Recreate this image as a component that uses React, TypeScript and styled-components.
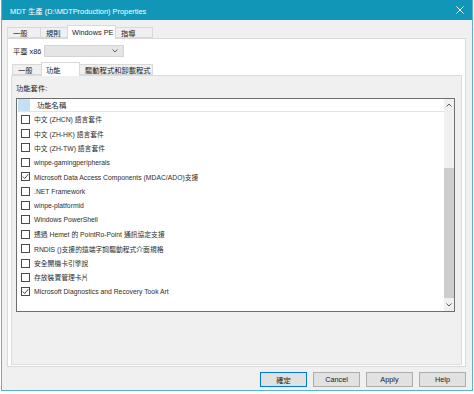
import React from 'react';
import styled, {createGlobalStyle} from 'styled-components';

const GlobalStyle = createGlobalStyle`
  html, body {
    margin: 0;
    padding: 0;
    background: #fff;
  }
  body {
    font-family: "Liberation Sans", "Noto Sans CJK TC", sans-serif;
    font-size: 6.8px;
    color: #222;
  }
  #root {
    width: 474px;
    height: 394px;
  }
`

const Window = styled.div`
  box-sizing: border-box;
  margin-left: 1px;
  width: 472px;
  height: 391px;
  display: flex;
  flex-direction: column;
  border: 1px solid #58b4cf;
  border-top: none;
  background: #f0f0f0;
`
const TitleBar = styled.header`
  height: 20px;
  flex-shrink: 0;
  display: flex;
  align-items: center;
  justify-content: space-between;
  padding: 0 8px 0 8px;
  background: #1196b8;
  color: #fff;
  font-size: 7.4px;
`
const Body = styled.div`
  flex: 1;
  display: flex;
  flex-direction: column;
  padding: 5px 6px 0 5px;
`
const TabStrip = styled.div<{$h: number; $pl?: number}>`
  display: flex;
  align-items: flex-end;
  height: ${p => p.$h}px;
  padding-left: ${p => p.$pl || 0}px;
  flex-shrink: 0;
  position: relative;
  z-index: 1;
`
const Tab = styled.div<{$w: number; $active?: boolean}>`
  box-sizing: border-box;
  width: ${p => p.$w}px;
  height: ${p => (p.$active ? 14 : 11)}px;
  margin-bottom: ${p => (p.$active ? -1 : 0)}px;
  padding-left: ${p => (p.$active ? 4 : 5)}px;
  display: flex;
  align-items: center;
  white-space: nowrap;
  font-size: 7.3px;
  color: #1a1a1a;
  background: ${p => (p.$active ? '#fff' : '#f0f0f0')};
  border: 1px solid #d9d9d9;
  border-bottom: ${p => (p.$active ? 'none' : '1px solid #d9d9d9')};
  & + & {
    margin-left: -1px;
  }
`
const OuterPage = styled.div`
  box-sizing: border-box;
  height: 329px;
  display: flex;
  flex-direction: column;
  padding: 6px 3px 1px 3px;
  background: #fff;
  border: 1px solid #d9d9d9;
`
const PlatformRow = styled.div`
  height: 12px;
  display: flex;
  align-items: center;
  padding-left: 2px;
  font-size: 7.3px;
  color: #1a1a1a;
`
const Combo = styled.div`
  box-sizing: border-box;
  width: 80px;
  height: 12px;
  margin-left: 3px;
  display: flex;
  align-items: center;
  justify-content: flex-end;
  padding-right: 5px;
  background: #e5e5e5;
  border: 1px solid #d4d4d4;
`
const InnerTabs = styled(TabStrip)`
  margin-top: 5px;
`
const InnerPage = styled.div`
  box-sizing: border-box;
  flex: 1;
  display: flex;
  flex-direction: column;
  padding: 6px 6px 0 4px;
  background: #f0f0f0;
  border: 1px solid #dcdcdc;
`
const Label = styled.div`
  line-height: 14px;
  font-size: 7.3px;
  color: #1a1a1a;
`
const ListBox = styled.div`
  box-sizing: border-box;
  margin-top: 2px;
  height: 214px;
  display: flex;
  background: #fff;
  border: 1px solid #6e6e6e;
`
const List = styled.div`
  flex: 1;
  display: flex;
  flex-direction: column;
`
const Header = styled.div`
  box-sizing: border-box;
  height: 13px;
  display: flex;
  align-items: center;
  border-bottom: 1px solid #e3e3e3;
  font-size: 7.3px;
  color: #1a1a1a;
`
const HeaderMark = styled.div`
  width: 12px;
  height: 12px;
  margin: 0 7px 0 1px;
  background: #c5dff5;
`
const Row = styled.div`
  height: 14.4px;
  display: flex;
  align-items: center;
  padding-left: 4px;
  color: #2e2e2e;
  white-space: nowrap;
`
const Check = styled.div`
  box-sizing: border-box;
  width: 9px;
  height: 9px;
  margin-right: 4px;
  flex-shrink: 0;
  border: 1px solid #4a4a4a;
  background: #fff;
  display: flex;
  align-items: center;
  justify-content: center;
`
const ScrollBar = styled.div`
  width: 10px;
  display: flex;
  flex-direction: column;
  background: #f0f0f0;
`
const ScrollArrow = styled.div`
  height: 12px;
  display: flex;
  align-items: center;
  justify-content: center;
`
const Track = styled.div`
  flex: 1;
  padding-top: 57px;
`
const Thumb = styled.div`
  height: 130px;
  background: #cdcdcd;
`
const Footer = styled.footer`
  height: 23px;
  flex-shrink: 0;
  display: flex;
  justify-content: flex-end;
  align-items: flex-start;
  gap: 6px;
  padding-top: 5px;
  box-sizing: border-box;
`
const Button = styled.button<{$default?: boolean}>`
  box-sizing: border-box;
  width: 47px;
  height: 15px;
  padding: 0;
  font-family: inherit;
  font-size: 7.3px;
  color: #1a1a1a;
  background: #e1e1e1;
  border: 1px solid ${p => (p.$default ? '#0078d7' : '#adadad')};
`

const Chevron = ({up}: {up?: boolean}) => (
  <svg width="6" height="4" viewBox="0 0 6 4">
    <path d={up ? 'M0.5 3.5 L3 1 L5.5 3.5' : 'M0.5 0.5 L3 3 L5.5 0.5'} fill="none" stroke="#606060" strokeWidth="1" />
  </svg>
)

const rows: {name: string; checked?: boolean}[] = [
  {name: '中文 (ZHCN) 語言套件'},
  {name: '中文 (ZH-HK) 語言套件'},
  {name: '中文 (ZH-TW) 語言套件'},
  {name: 'winpe-gamingperipherals'},
  {name: 'Microsoft Data Access Components (MDAC/ADO)支援', checked: true},
  {name: '.NET Framework'},
  {name: 'winpe-platformid'},
  {name: 'Windows PowerShell'},
  {name: '透過 Hemet 的 PointRo-Point 通訊協定支援'},
  {name: 'RNDIS ()支援的遠端字詞驅動程式介面規格'},
  {name: '安全開機卡引擎說'},
  {name: '存放裝置管理卡片'},
  {name: 'Microsoft Diagnostics and Recovery Took Art', checked: true},
]

const App: React.FC = () => {
  return (
    <>
      <GlobalStyle />
      <Window>
        <TitleBar>
          <span>MDT 生產 (D:\MDTProduction) Properties</span>
          <svg width="8" height="8" viewBox="0 0 8 8">
            <path d="M0.5 0.5 L7.5 7.5 M7.5 0.5 L0.5 7.5" stroke="#fff" strokeWidth="1" />
          </svg>
        </TitleBar>
        <Body>
          <TabStrip $h={13}>
            <Tab $w={34}>一般</Tab>
            <Tab $w={28}>規則</Tab>
            <Tab $w={49} $active>Windows PE</Tab>
            <Tab $w={38}>指導</Tab>
          </TabStrip>
          <OuterPage>
            <PlatformRow>
              平臺 x86
              <Combo><Chevron /></Combo>
            </PlatformRow>
            <InnerTabs $h={13} $pl={1}>
              <Tab $w={30}>一般</Tab>
              <Tab $w={39} $active>功能</Tab>
              <Tab $w={74}>驅動程式和卸載程式</Tab>
            </InnerTabs>
            <InnerPage>
              <Label>功能套件:</Label>
              <ListBox>
                <List>
                  <Header>
                    <HeaderMark />
                    功能名稱
                  </Header>
                  {rows.map(r => (
                    <Row key={r.name}>
                      <Check>
                        {r.checked && (
                          <svg width="7" height="7" viewBox="0 0 7 7">
                            <path d="M0.8 3.6 L2.7 5.5 L6.3 1.2" fill="none" stroke="#333" strokeWidth="0.9" />
                          </svg>
                        )}
                      </Check>
                      {r.name}
                    </Row>
                  ))}
                </List>
                <ScrollBar>
                  <ScrollArrow><Chevron up /></ScrollArrow>
                  <Track><Thumb /></Track>
                  <ScrollArrow><Chevron /></ScrollArrow>
                </ScrollBar>
              </ListBox>
            </InnerPage>
          </OuterPage>
          <Footer>
            <Button $default>確定</Button>
            <Button>Cancel</Button>
            <Button>Apply</Button>
            <Button>Help</Button>
          </Footer>
        </Body>
      </Window>
    </>
  )
}

export default App;
